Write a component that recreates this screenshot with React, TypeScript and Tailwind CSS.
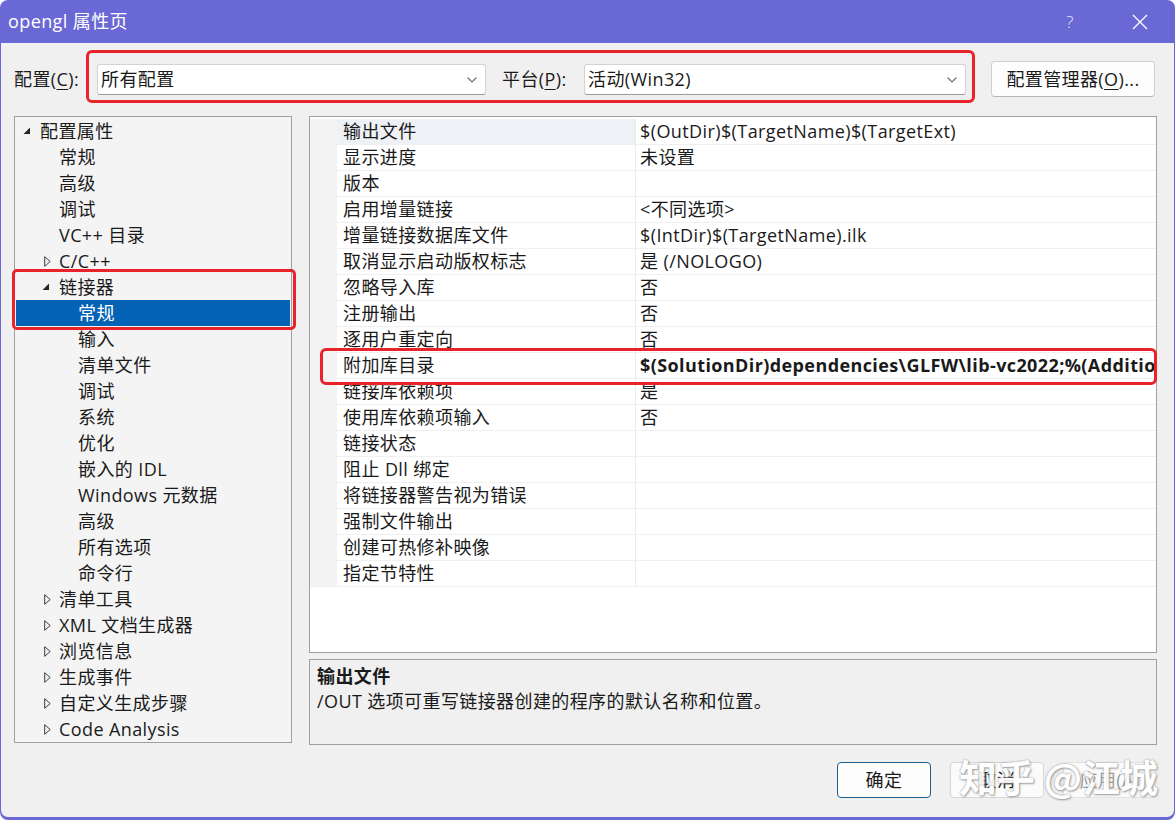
import React from "react";

const FONT = { fontFamily: '"Open Sans", "Noto Sans CJK SC", sans-serif' };

type TreeItem = { l: number; t: string; exp?: boolean; col?: boolean; sel?: boolean };

const tree: TreeItem[] = [
  { l: 0, t: "配置属性", exp: true },
  { l: 1, t: "常规" },
  { l: 1, t: "高级" },
  { l: 1, t: "调试" },
  { l: 1, t: "VC++ 目录" },
  { l: 1, t: "C/C++", col: true },
  { l: 1, t: "链接器", exp: true },
  { l: 2, t: "常规", sel: true },
  { l: 2, t: "输入" },
  { l: 2, t: "清单文件" },
  { l: 2, t: "调试" },
  { l: 2, t: "系统" },
  { l: 2, t: "优化" },
  { l: 2, t: "嵌入的 IDL" },
  { l: 2, t: "Windows 元数据" },
  { l: 2, t: "高级" },
  { l: 2, t: "所有选项" },
  { l: 2, t: "命令行" },
  { l: 1, t: "清单工具", col: true },
  { l: 1, t: "XML 文档生成器", col: true },
  { l: 1, t: "浏览信息", col: true },
  { l: 1, t: "生成事件", col: true },
  { l: 1, t: "自定义生成步骤", col: true },
  { l: 1, t: "Code Analysis", col: true },
];

const props: [string, string, boolean?][] = [
  ["输出文件", "$(OutDir)$(TargetName)$(TargetExt)"],
  ["显示进度", "未设置"],
  ["版本", ""],
  ["启用增量链接", "<不同选项>"],
  ["增量链接数据库文件", "$(IntDir)$(TargetName).ilk"],
  ["取消显示启动版权标志", "是 (/NOLOGO)"],
  ["忽略导入库", "否"],
  ["注册输出", "否"],
  ["逐用户重定向", "否"],
  ["附加库目录", "$(SolutionDir)dependencies\\GLFW\\lib-vc2022;%(AdditionalLibraryDirectories)", true],
  ["链接库依赖项", "是"],
  ["使用库依赖项输入", "否"],
  ["链接状态", ""],
  ["阻止 Dll 绑定", ""],
  ["将链接器警告视为错误", ""],
  ["强制文件输出", ""],
  ["创建可热修补映像", ""],
  ["指定节特性", ""],
];

const padFor = (l: number) => (l === 0 ? "pl-[6px]" : l === 1 ? "pl-[25px]" : "pl-[44px]");

function Chevron() {
  return (
    <svg width="12" height="8" viewBox="0 0 12 8" className="shrink-0">
      <polyline points="1.5,1.5 6,6 10.5,1.5" fill="none" stroke="#6b6b6b" strokeWidth="1.1" />
    </svg>
  );
}

function Expanded() {
  return (
    <svg width="8" height="8" viewBox="0 0 8 8">
      <polygon points="7,0.5 7,7 0.5,7" fill="#262626" />
    </svg>
  );
}

function Collapsed() {
  return (
    <svg width="7" height="11" viewBox="0 0 7 11">
      <polygon points="0.7,0.7 6.2,5.5 0.7,10.3" fill="none" stroke="#3a3a3a" strokeWidth="1" />
    </svg>
  );
}

export default function App() {
  return (
    <div className="w-[1175px] h-[820px] bg-white" style={FONT}>
      <div className="w-full h-full rounded-[8px] overflow-hidden bg-[#6a68d5] flex flex-col text-[18px] text-[#1a1a1a] tracking-[0.4px]">
        {/* Title bar */}
        <div className="h-[43px] shrink-0 flex items-center text-white">
          <div className="pl-[8px] text-[18px] flex-1 leading-none pb-[1px]">opengl 属性页</div>
          <div className="w-[46px] text-center text-[17px] text-[#e6e6f8] font-light mr-[24px]">?</div>
          <div className="w-[46px] flex justify-center mr-[12px]">
            <svg width="16" height="16" viewBox="0 0 16 16">
              <path d="M1 1 L15 15 M15 1 L1 15" stroke="#fff" strokeWidth="1.3" fill="none" />
            </svg>
          </div>
        </div>

        {/* Body */}
        <div className="relative flex-1 mx-[1px] mb-[3px] bg-[#f0f0f0] rounded-b-[7px] flex flex-col">
          {/* Config row */}
          <div className="flex items-start pt-[7px] pl-[13px] h-[73px]">
            <div className="w-[72px] h-[31px] mt-[14px] flex items-center whitespace-nowrap">
              配置(<span className="underline underline-offset-[3px]">C</span>):
            </div>
            <div className="w-[889px] h-[53px] border-[3px] border-[#e8242a] rounded-[6px] pl-[8px] pt-[11px] flex items-start">
              <div className="w-[389px] h-[31px] bg-white border border-[#d3d3d3] border-b-[#9b9b9b] rounded-[3px] flex items-center pl-[3px] pr-[7px]">
                <span className="flex-1">所有配置</span>
                <Chevron />
              </div>
              <div className="w-[98px] h-[31px] pl-[16px] flex items-center whitespace-nowrap">
                平台(<span className="underline underline-offset-[3px]">P</span>):
              </div>
              <div className="w-[382px] h-[31px] bg-white border border-[#d3d3d3] border-b-[#9b9b9b] rounded-[3px] flex items-center pl-[3px] pr-[7px]">
                <span className="flex-1">活动(Win32)</span>
                <Chevron />
              </div>
            </div>
            <div className="ml-[16px] mt-[11px] w-[164px] h-[36px] bg-[#fdfdfd] border border-[#d0d0d0] border-b-[#b5b5b5] rounded-[4px] flex items-center justify-center whitespace-nowrap">
              配置管理器(<span className="underline underline-offset-[3px]">O</span>)...
            </div>
          </div>

          {/* Main */}
          <div className="flex pl-[13px] gap-[17px]">
            {/* Tree */}
            <div className="relative w-[278px] h-[627px] border border-[#a0a0a0] bg-[#f4f4f4] pt-[1px]">
              {tree.map((it, i) => (
                <div
                  key={i}
                  className={`h-[26px] mx-[1px] flex items-center whitespace-nowrap ${padFor(it.l)} ${
                    it.sel ? "bg-[#0563b5] text-white" : ""
                  }`}
                >
                  <div className="w-[18px] h-[26px] flex items-center">
                    {it.exp ? (
                      <span className="pl-[1px] pb-[1px]">
                        <Expanded />
                      </span>
                    ) : it.col ? (
                      <span className="pl-[3px] flex">
                        <Collapsed />
                      </span>
                    ) : null}
                  </div>
                  <span className="leading-none">{it.t}</span>
                </div>
              ))}
              <div className="absolute left-[-3px] top-[152px] w-[284px] h-[61px] border-[3px] border-[#e8242a] rounded-[5px] pointer-events-none" />
            </div>

            {/* Right column */}
            <div className="w-[848px] flex flex-col gap-[6px]">
              <div className="relative h-[537px] border border-[#a0a0a0] bg-white pt-[2px]">
                <div className="flex flex-col">
                  {props.map(([n, v, b], i) => (
                    <div key={i} className="h-[26px] flex border-b border-[#f0f0f0]">
                      <div className="w-[27px] bg-[#f3f3f3] shrink-0" />
                      <div
                        className={`w-[299px] shrink-0 pl-[6px] flex items-center whitespace-nowrap border-r border-[#ececec] ${
                          i === 0 ? "bg-[#eef1f6]" : ""
                        }`}
                      >
                        {n}
                      </div>
                      <div
                        className={`flex-1 min-w-0 pl-[4px] pr-[4px] flex items-center whitespace-nowrap overflow-hidden ${
                          b ? "font-bold" : ""
                        }`}
                      >
                        {v}
                      </div>
                    </div>
                  ))}
                </div>
                <div className="absolute left-[10px] top-[231px] w-[837px] h-[37px] border-[3px] border-[#e8242a] rounded-[6px] pointer-events-none" />
              </div>
              <div className="h-[86px] border border-[#a0a0a0] bg-[#f0f0f0] pl-[7px] pt-[4px] flex flex-col">
                <div className="font-bold leading-[24px]">输出文件</div>
                <div className="leading-[26px]">/OUT 选项可重写链接器创建的程序的默认名称和位置。</div>
              </div>
            </div>
          </div>

          {/* Buttons */}
          <div className="flex justify-end gap-[19px] pr-[18px] mt-[17px]">
            <div className="w-[94px] h-[36px] bg-[#fdfdfd] border border-[#1d5f8c] rounded-[4px] flex items-center justify-center">
              确定
            </div>
            <div className="w-[94px] h-[36px] bg-[#fbfbfb] border border-[#d6d6d6] rounded-[4px] flex items-center justify-center">
              取消
            </div>
            <div className="w-[93px] h-[36px] bg-[#fbfbfb] border border-[#e2e2e2] rounded-[4px] flex items-center justify-center text-[#9a9a9a]">
              应用(A)
            </div>
          </div>

          {/* Watermark */}
          <div
            className="absolute left-[958px] top-[704px] text-[38px] text-white font-bold tracking-normal whitespace-nowrap pointer-events-none opacity-90 [text-shadow:0_0_2px_#8a8a8a,1px_1px_2px_#9a9a9a]"
            style={{ fontFamily: '"Noto Sans CJK SC", sans-serif' }}
          >
            知乎 @江城
          </div>
        </div>
      </div>
    </div>
  );
}
